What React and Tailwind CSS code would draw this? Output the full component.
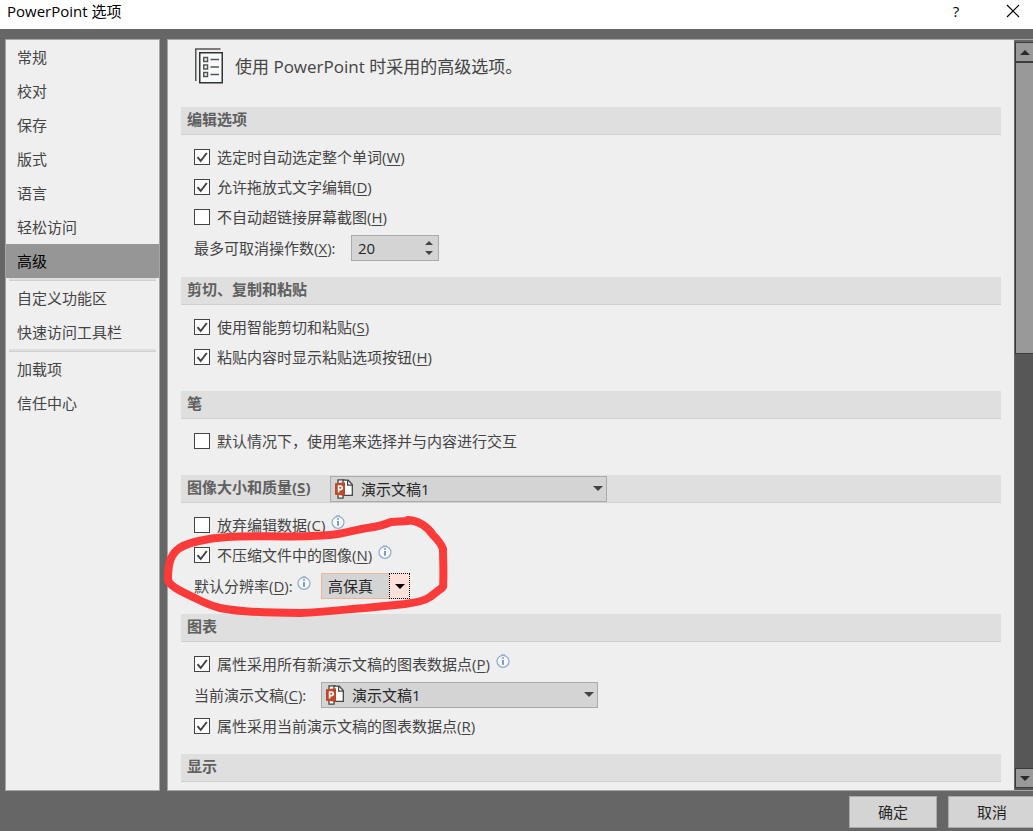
import clsx from 'clsx';

const NAV_GROUPS = [
  ['常规', '校对', '保存', '版式', '语言', '轻松访问', '高级'],
  ['自定义功能区', '快速访问工具栏'],
  ['加载项', '信任中心'],
];

const ACTIVE = '高级';

function Caret({ up, className }) {
  return (
    <svg viewBox="0 0 10 5" className={clsx('pointer-events-none fill-current', className)} aria-hidden="true">
      <path d={up ? 'M0 5h10L5 0z' : 'M0 0h10L5 5z'} />
    </svg>
  );
}

function InfoIcon() {
  return (
    <svg viewBox="0 0 14 14" className="w-[14px] h-[14px] shrink-0" fill="none" aria-hidden="true">
      <circle cx="7" cy="7.3" r="6" fill="#f8fafd" stroke="#8fa9d3" strokeWidth="1.2" />
      <path d="M5 .7h4" stroke="#a9bddf" />
      <path d="M7 6v4.8" stroke="#3f66ab" strokeWidth="1.3" />
      <path d="M7 3.3v1.5" stroke="#3f66ab" strokeWidth="1.3" />
    </svg>
  );
}

function ListIcon() {
  return (
    <svg viewBox="0 0 28 36" className="w-7 h-9 shrink-0" fill="none" aria-hidden="true">
      <path d="M.75 33V1H25.5" stroke="#555" strokeWidth="1.5" />
      <rect x="4.75" y="4.75" width="22.5" height="30" fill="#f8fbfb" stroke="#333" strokeWidth="1.5" />
      {[9.5, 17, 24.5].map((y) => (
        <g key={y} stroke="#555" strokeWidth="1.5">
          <rect x="8.75" y={y} width="3.75" height="4" />
          <path d={`M15.5 ${y + 2}H24`} />
        </g>
      ))}
    </svg>
  );
}

function PptIcon() {
  return (
    <svg viewBox="0 0 18 20" className="pointer-events-none absolute left-[5px] top-[3px] w-[18px] h-5" fill="none" aria-hidden="true">
      <path d="M3 5V.8h6l-1 18.4H3V15" fill="#fff" stroke="#444" strokeWidth="1.3" />
      <path d="M8 1.2h5.2L17.3 5.6v10.8H8z" fill="#fff" stroke="#444" strokeWidth="1.3" />
      <path d="M12.6 1.2v5h4.7" stroke="#444" strokeWidth="1.2" />
      <path d="M0 4.3 10 3.3v13.4L0 15.7z" fill="#c0482a" />
      <path d="M3.6 13.6V7h1.8a1.8 1.8 0 0 1 0 3.7H3.6" stroke="#fff" strokeWidth="1.7" />
    </svg>
  );
}

function Label({ text, accessKey: k, end = '' }) {
  return (
    <span className="whitespace-nowrap">
      {text}
      {k && <>(<u className="underline-offset-2">{k}</u>)</>}
      {end}
    </span>
  );
}

function Check({ text, k, checked, info }) {
  return (
    <label className="flex h-[30px] items-center gap-[7px]">
      <span className="relative flex">
        <input
          type="checkbox"
          defaultChecked={checked}
          className="peer size-4 appearance-none border border-[#444] bg-white"
        />
        <svg viewBox="0 0 16 16" className="pointer-events-none absolute inset-0 hidden size-4 peer-checked:block" fill="none" aria-hidden="true">
          <path d="M3.5 8.2 6.7 12 12.8 4" stroke="#444" strokeWidth="2" />
        </svg>
      </span>
      <span className="flex items-center gap-[6px]">
        <Label text={text} accessKey={k} />
        {info && <span className="pb-[6px]"><InfoIcon /></span>}
      </span>
    </label>
  );
}

function DocSelect({ id }) {
  return (
    <span className="relative block w-[277px]">
      <select id={id} className="block h-[26px] w-full appearance-none border border-[#ababab] bg-[#d4d4d4] pl-[30px] text-[#262626]">
        <option>演示文稿1</option>
      </select>
      <PptIcon />
      <Caret className="absolute right-1 top-[10px] h-[5px] w-[10px]" />
    </span>
  );
}

function Section({ title, header, children, className }) {
  return (
    <section className={clsx('relative', className)}>
      <div className="flex h-7 items-center border-b border-[#d0d0d0] bg-[#dfdfdf] pl-[6px]">
        {header || <h2 className="pb-1 font-bold text-[#606060]">{title}</h2>}
      </div>
      <div className="pl-[13px] pt-[7px]">{children}</div>
    </section>
  );
}

function Sidebar() {
  return (
    <nav className="w-[155px] shrink-0 border border-[#a5a5a5] bg-[#efefef]">
      {NAV_GROUPS.map((items, i) => (
        <div key={items[0]}>
          {i > 0 && <div className="mx-[3px] h-[3px] border-b border-[#cfcfcf] bg-[#dedede]" />}
          {items.map((item) => (
            <button
              key={item}
              type="button"
              className={clsx('block h-[34px] w-full pl-[11px] text-left', item === ACTIVE && 'bg-[#969696] text-black')}
            >
              {item}
            </button>
          ))}
        </div>
      ))}
    </nav>
  );
}

function ScrollBar() {
  return (
    <div className="flex w-[19px] shrink-0 flex-col border-l border-t-2 border-[#666] bg-[#575757] text-[#2b2b2b]">
      <button type="button" aria-label="向上滚动" className="flex h-5 items-center justify-center border border-r-0 border-[#3b3b3b] bg-[#999]">
        <Caret up className="h-[5px] w-[10px]" />
      </button>
      <div className="h-[292px] border border-r-0 border-[#3b3b3b] bg-[#999]" />
      <button type="button" aria-label="向下滚动" className="mb-[2px] mt-auto flex h-5 items-center justify-center border border-r-0 border-[#3b3b3b] bg-[#999]">
        <Caret className="h-[5px] w-[10px]" />
      </button>
    </div>
  );
}

// Hand-drawn marker loop around the compression settings
function MarkerLoop() {
  return (
    <svg viewBox="160 515 290 105" className="pointer-events-none absolute -left-[21px] top-10 z-10 h-[105px] w-[290px]" fill="none" aria-hidden="true">
      <path
        d="M408 521 391 522 C384 525 375 527 367 528 C354 530 343 534 330 535 C300 538 250 535 227 537 C208 538 184 543 177 550 C169 557 168 568 168 580 C170 586 178 590 197 599 C205 603 212 606 220 608 C240 612 262 613 300 613 C325 612 350 609 365 608 L405 604 C418 602 424 601 430 597 L443 587 C444 575 443 560 443 549 C441 543 436 538 433 535 C427 526 420 521 408 520"
        stroke="#fd3a3a"
        strokeWidth="8"
        strokeLinecap="round"
        strokeLinejoin="round"
      />
    </svg>
  );
}

export default function App() {
  return (
    <div className="flex min-h-screen flex-col overflow-hidden bg-[#666] font-['Open_Sans','Noto_Sans_CJK_SC',sans-serif] text-[15px] leading-5 text-[#444]">
      <header className="flex h-[29px] items-center justify-between bg-white pb-2 pl-[7px] text-black">
        <h1>PowerPoint 选项</h1>
        <div className="flex items-center gap-[42px] pr-[13px]">
          <button type="button" aria-label="帮助" className="w-4 text-center">?</button>
          <button type="button" aria-label="关闭">
            <svg viewBox="0 0 14 14" className="size-[14px]" fill="none" stroke="#000" strokeWidth="1.2">
              <path d="m1 1 12 12M13 1 1 13" />
            </svg>
          </button>
        </div>
      </header>

      <div className="flex flex-1 gap-[7px] pl-[5px] pt-[10px]">
        <Sidebar />

        <main className="flex min-w-0 flex-1 border-y border-l border-[#a5a5a5] bg-[#efefef]">
          <div className="min-w-0 flex-1 px-[13px]">
            <div className="flex h-[67px] items-start gap-3 pl-[14px] pt-2">
              <ListIcon />
              <p className="text-[17px] leading-[38px]">使用 PowerPoint 时采用的高级选项。</p>
            </div>

            <Section title="编辑选项" className="pb-[13px]">
              <Check text="选定时自动选定整个单词" k="W" checked />
              <Check text="允许拖放式文字编辑" k="D" checked />
              <Check text="不自动超链接屏幕截图" k="H" />
              <div className="flex h-8 items-center">
                <label htmlFor="undo" className="w-[157px]">
                  <Label text="最多可取消操作数" accessKey="X" end=":" />
                </label>
                <span className="relative">
                  <input
                    id="undo"
                    type="number"
                    defaultValue={20}
                    className="block h-[26px] w-[88px] appearance-none border border-[#ababab] bg-[#d4d4d4] pl-[6px] text-[#262626] [appearance:textfield] [&::-webkit-inner-spin-button]:appearance-none"
                  />
                  <span className="absolute right-[6px] top-1 flex flex-col gap-[2px]">
                    <button type="button" aria-label="增加" className="flex h-2 items-center"><Caret up className="h-1 w-2" /></button>
                    <button type="button" aria-label="减少" className="flex h-2 items-center"><Caret className="h-1 w-2" /></button>
                  </span>
                </span>
              </div>
            </Section>

            <Section title="剪切、复制和粘贴" className="pb-[19px]">
              <Check text="使用智能剪切和粘贴" k="S" checked />
              <Check text="粘贴内容时显示粘贴选项按钮" k="H" checked />
            </Section>

            <Section title="笔" className="pb-[19px]">
              <Check text="默认情况下，使用笔来选择并与内容进行交互" />
            </Section>

            <Section
              className="pb-3"
              header={
                <>
                  <label htmlFor="image-doc" className="w-[143px] pb-1 font-bold text-[#606060]">
                    <Label text="图像大小和质量" accessKey="S" />
                  </label>
                  <DocSelect id="image-doc" />
                </>
              }
            >
              <Check text="放弃编辑数据" k="C" info />
              <Check text="不压缩文件中的图像" k="N" checked info />
              <div className="flex h-8 items-center">
                <label htmlFor="dpi" className="flex w-[127px] items-center gap-1">
                  <Label text="默认分辨率" accessKey="D" end=":" />
                  <span className="pb-[6px]"><InfoIcon /></span>
                </label>
                <span className="relative">
                  <select id="dpi" className="block h-[26px] w-[89px] appearance-none border border-[#f3b295] bg-[#d4d4d4] pl-[6px] text-[#262626]">
                    <option>高保真</option>
                  </select>
                  <span className="pointer-events-none absolute inset-y-0 right-0 flex w-[21px] items-center justify-center border border-dotted border-black bg-[#fde1d8] text-black">
                    <Caret className="h-[5px] w-[10px]" />
                  </span>
                </span>
              </div>
              <MarkerLoop />
            </Section>

            <Section title="图表" className="pb-[13px]">
              <Check text="属性采用所有新演示文稿的图表数据点" k="P" checked info />
              <div className="flex h-8 items-center">
                <label htmlFor="chart-doc" className="w-[127px]">
                  <Label text="当前演示文稿" accessKey="C" end=":" />
                </label>
                <DocSelect id="chart-doc" />
              </div>
              <Check text="属性采用当前演示文稿的图表数据点" k="R" checked />
            </Section>

            <Section title="显示" />
          </div>
          <ScrollBar />
        </main>
      </div>

      <footer className="-mr-[3px] flex h-10 shrink-0 items-start justify-end gap-[11px] pt-[5px] text-[#262626]">
        <button type="button" className="h-8 w-[88px] border border-[#ababab] bg-[#d4d4d4]">确定</button>
        <button type="button" className="h-8 w-[88px] border border-[#ababab] bg-[#d4d4d4]">取消</button>
      </footer>
    </div>
  );
}
